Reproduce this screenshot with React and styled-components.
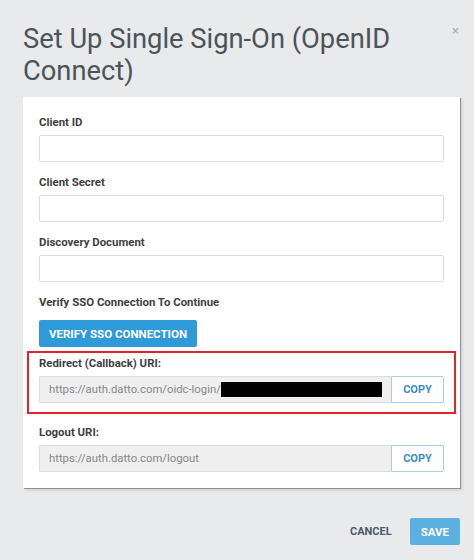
import React from 'react';
import styled, { createGlobalStyle } from 'styled-components';

const GlobalStyle = createGlobalStyle`
	html, body {
		margin: 0;
		padding: 0;
		background: #e9eaec;
	}
	* {
		box-sizing: border-box;
	}
`;

const Modal = styled.div`
	width: 474px;
	min-height: 560px;
	background: #e9eaec;
	padding: 23px 14px 0 23px;
	font-family: Roboto, 'Liberation Sans', sans-serif;
`;

const Header = styled.div`
	display: flex;
	justify-content: space-between;
	align-items: flex-start;
`;

const Title = styled.h1`
	margin: 0;
	font-size: 27.3px;
	line-height: 32px;
	font-weight: 400;
	color: #4b5459;
	width: 410px;
`;

const Close = styled.span`
	font-size: 13px;
	line-height: 14px;
	color: #a9acaf;
	margin-top: 1px;
	margin-right: 1px;
`;

const Card = styled.div`
	margin-top: 10px;
	width: 437px;
	background: #fff;
	padding: 17px 16px 16px 16px;
	box-shadow: 1px 1px 0 #8e9093, 2px 2px 3px rgba(0, 0, 0, 0.12);
`;

const Field = styled.div`
	margin-bottom: ${(p) => (p.$last ? '0' : '12px')};
`;

const Label = styled.div`
	font-size: 11.4px;
	line-height: 16px;
	font-weight: 700;
	color: #3d3f41;
	margin-bottom: 5px;
`;

const TextInput = styled.input`
	display: block;
	width: 100%;
	height: 27px;
	border: 1px solid #dcdcdc;
	border-radius: 2px;
	background: #fff;
	outline: none;
`;

const PrimaryButton = styled.button`
	height: 27px;
	padding: 0 ${(p) => (p.$disabled ? '11px' : '10px')};
	border: none;
	border-radius: 2px;
	background: ${(p) => (p.$disabled ? '#5cb0e1' : '#2f9ad9')};
	color: #fff;
	font-family: Roboto, 'Liberation Sans', sans-serif;
	font-weight: 700;
	font-size: 11.5px;
	text-transform: uppercase;
	margin-top: ${(p) => p.$top || '0'};
`;

const Highlight = styled.div`
	margin: 4px -12px 10px -12px;
	border: 2px solid #e0242b;
	padding: 2px 10px 9px 10px;
`;

const CopyRow = styled.div`
	display: flex;
	height: 27px;
`;

const ReadOnly = styled.div`
	flex: 1;
	display: flex;
	align-items: center;
	background: #efefef;
	border: 1px solid #dcdcdc;
	border-right: none;
	border-radius: 2px 0 0 2px;
	padding: 0 9px;
	font-size: 11.3px;
	color: #858789;
	white-space: nowrap;
	overflow: hidden;
`;

const Redacted = styled.span`
	display: inline-block;
	width: 169px;
	height: 15px;
	background: #000;
`;

const CopyButton = styled.button`
	width: 53px;
	border: 1px solid #a8cde4;
	border-radius: 0 2px 2px 0;
	background: #fff;
	color: #3a8dc4;
	font-family: Roboto, 'Liberation Sans', sans-serif;
	font-weight: 700;
	font-size: 11px;
	padding: 0;
`;

const Footer = styled.div`
	display: flex;
	justify-content: flex-end;
	align-items: center;
	gap: 18px;
	margin-top: 30px;
	width: 437px;
`;

const TextButton = styled.button`
	border: none;
	background: none;
	padding: 0;
	font-family: Roboto, 'Liberation Sans', sans-serif;
	font-weight: 700;
	font-size: 11px;
	color: #4a5a6d;
`;

export default function App() {
	return (
		<>
			<GlobalStyle />
			<Modal>
				<Header>
					<Title>Set Up Single Sign-On (OpenID Connect)</Title>
					<Close>×</Close>
				</Header>
				<Card>
					<Field>
						<Label>Client ID</Label>
						<TextInput />
					</Field>
					<Field>
						<Label>Client Secret</Label>
						<TextInput />
					</Field>
					<Field>
						<Label>Discovery Document</Label>
						<TextInput />
					</Field>
					<Field $last>
						<Label>Verify SSO Connection To Continue</Label>
						<PrimaryButton $top="5px">Verify SSO Connection</PrimaryButton>
					</Field>
					<Highlight>
						<Label>Redirect (Callback) URI:</Label>
						<CopyRow>
							<ReadOnly>
								https://auth.datto.com/oidc-login/
								<Redacted />
							</ReadOnly>
							<CopyButton>COPY</CopyButton>
						</CopyRow>
					</Highlight>
					<Field $last>
						<Label>Logout URI:</Label>
						<CopyRow>
							<ReadOnly>https://auth.datto.com/logout</ReadOnly>
							<CopyButton>COPY</CopyButton>
						</CopyRow>
					</Field>
				</Card>
				<Footer>
					<TextButton>CANCEL</TextButton>
					<PrimaryButton $disabled>SAVE</PrimaryButton>
				</Footer>
			</Modal>
		</>
	);
}
